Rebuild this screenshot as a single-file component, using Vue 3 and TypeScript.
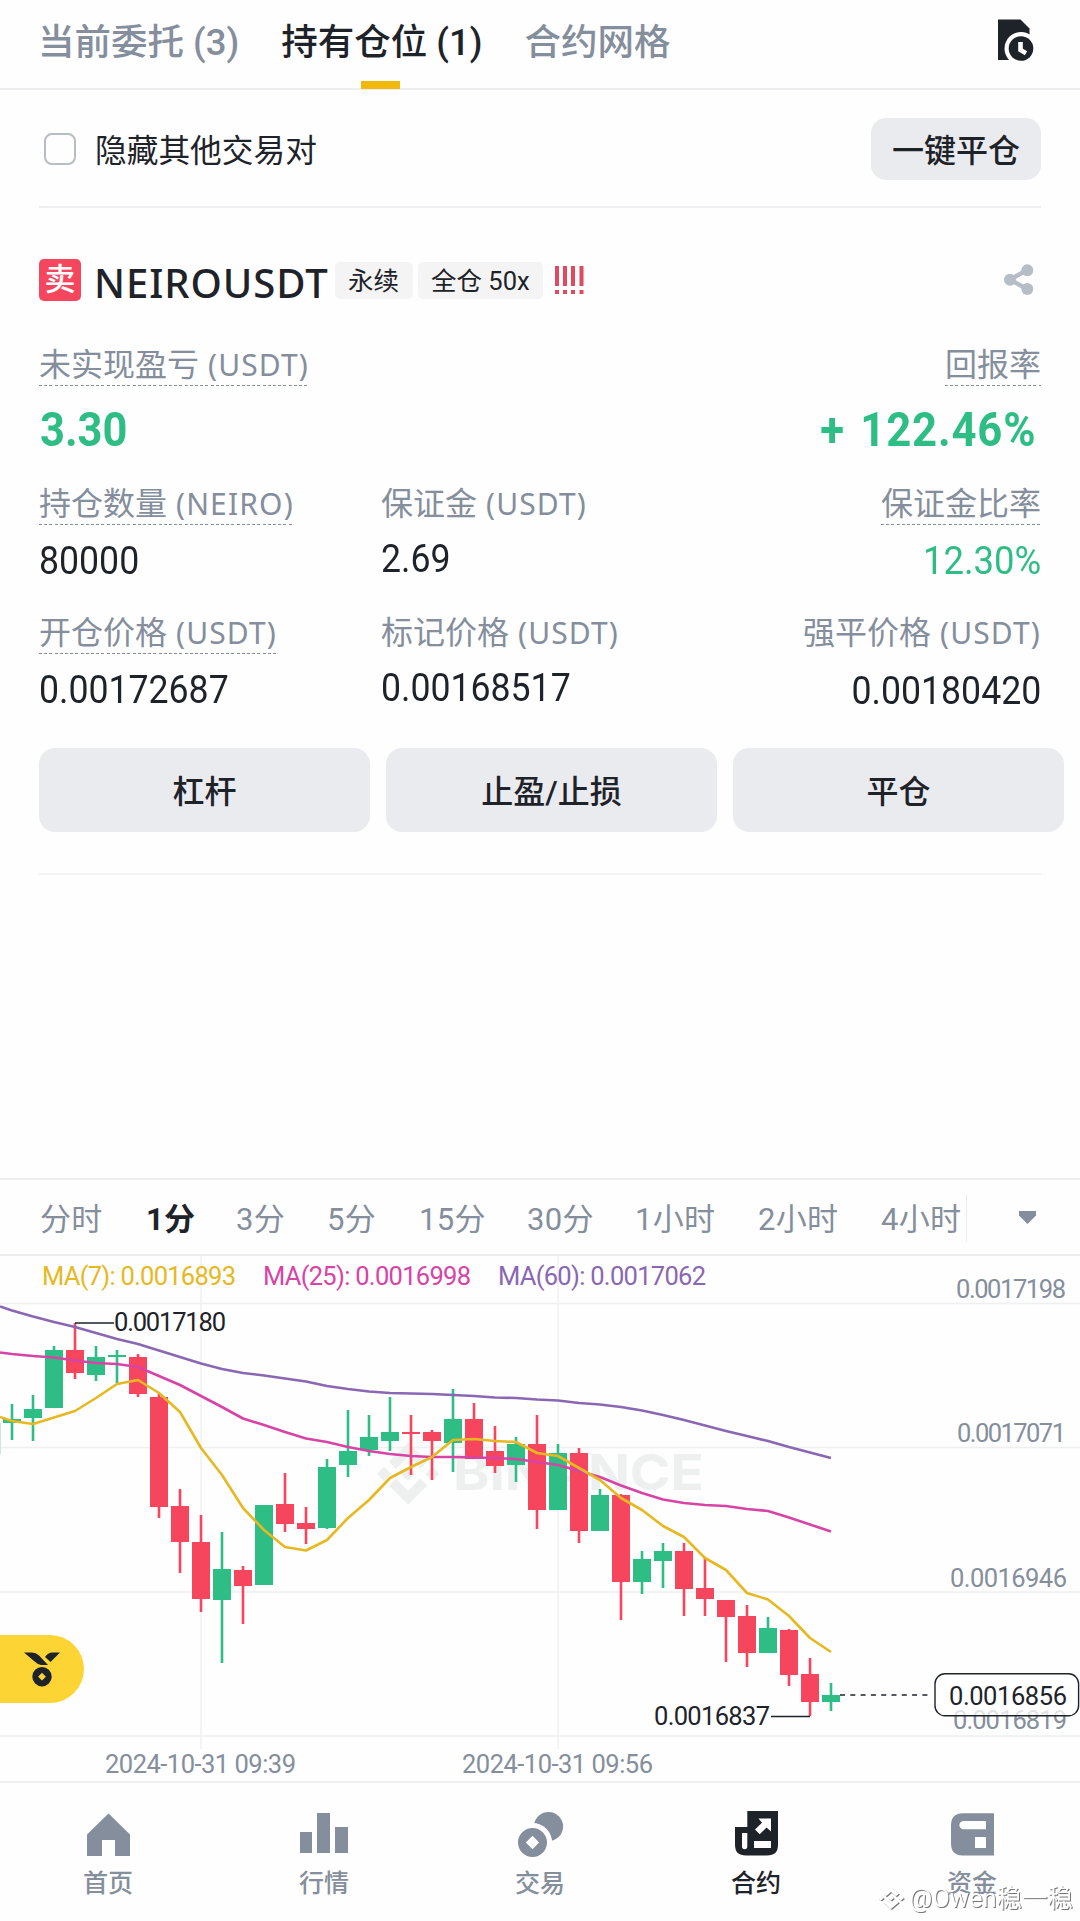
<script setup lang="ts">
interface Metric {
  zh: string
  unit?: string
  value: string
  dashed?: boolean
  tone?: 'up'
  align?: 'right'
}

type Candle = [number, number, number, number, 0 | 1]

const metrics: Metric[] = [
  { zh: '持仓数量', unit: '(NEIRO)', value: '80000', dashed: true },
  { zh: '保证金', unit: '(USDT)', value: '2.69' },
  { zh: '保证金比率', value: '12.30%', dashed: true, tone: 'up', align: 'right' },
  { zh: '开仓价格', unit: '(USDT)', value: '0.00172687', dashed: true },
  { zh: '标记价格', unit: '(USDT)', value: '0.00168517' },
  { zh: '强平价格', unit: '(USDT)', value: '0.00180420', align: 'right' },
]

const actions = ['杠杆', '止盈/止损', '平仓']

const intervals = [
  { label: '分时', width: 106 },
  { label: '1分', width: 90, active: true },
  { label: '3分', width: 91 },
  { label: '5分', width: 92 },
  { label: '15分', width: 108 },
  { label: '30分', width: 108 },
  { label: '1小时', width: 123 },
  { label: '2小时', width: 123 },
  { label: '4小时', width: 85 },
]

// high, body top, body bottom, low, rising
const candles: Candle[] = [
  [1404, 1419, 1423, 1440, 1], [1395, 1409, 1418, 1441, 1], [1346, 1350, 1408, 1408, 1],
  [1323, 1350, 1373, 1379, 0], [1346, 1357, 1375, 1381, 1], [1350, 1355, 1357, 1383, 1],
  [1354, 1357, 1394, 1397, 0], [1393, 1397, 1507, 1518, 0], [1489, 1506, 1542, 1573, 0],
  [1515, 1542, 1599, 1612, 0], [1532, 1569, 1600, 1663, 1], [1566, 1570, 1586, 1624, 0],
  [1505, 1505, 1585, 1585, 1], [1473, 1504, 1524, 1532, 0], [1507, 1523, 1529, 1544, 0],
  [1459, 1467, 1528, 1529, 1], [1410, 1451, 1465, 1477, 1], [1415, 1437, 1450, 1456, 1],
  [1397, 1432, 1441, 1451, 1], [1415, 1432, 1434, 1475, 0], [1430, 1432, 1441, 1480, 0],
  [1389, 1419, 1443, 1472, 1], [1403, 1419, 1459, 1459, 0], [1426, 1451, 1466, 1473, 0],
  [1437, 1444, 1465, 1482, 1], [1415, 1444, 1510, 1529, 0], [1444, 1453, 1510, 1510, 1],
  [1448, 1453, 1531, 1543, 0], [1489, 1495, 1531, 1531, 1], [1494, 1495, 1582, 1620, 0],
  [1551, 1559, 1582, 1594, 1], [1543, 1551, 1561, 1588, 1], [1543, 1551, 1589, 1616, 0],
  [1557, 1588, 1599, 1616, 0], [1600, 1600, 1617, 1662, 0], [1605, 1616, 1653, 1667, 0],
  [1617, 1628, 1653, 1653, 1], [1629, 1630, 1675, 1686, 0], [1658, 1674, 1702, 1716, 0],
  [1683, 1695, 1702, 1711, 1],
]
const centre = (i: number) => 12 + i * 21

const line = (first: number, ys: number[]) =>
  `0,${first} ` + ys.map((y, i) => `${centre(i)},${y}`).join(' ')

const ma7 = line(1417, [
  1421, 1424, 1417.5, 1411, 1398, 1384, 1380, 1393, 1412, 1448, 1475, 1508, 1530, 1547, 1550.5,
  1540, 1518, 1500, 1478, 1467, 1457, 1440, 1439, 1441, 1442, 1453, 1456, 1468, 1480, 1498, 1510,
  1526, 1537, 1558, 1570, 1593, 1599.5, 1616, 1638, 1652,
])
const ma25 = line(1352.5, [
  1354, 1356, 1357.5, 1360.5, 1363, 1364, 1367, 1376, 1385, 1396, 1407, 1418.5, 1425, 1432, 1438.5,
  1442, 1447, 1451, 1454, 1456, 1457, 1457, 1457.5, 1458, 1459, 1462, 1465, 1471, 1477, 1485.5,
  1493, 1499.5, 1503, 1505, 1506, 1509, 1511, 1517.5, 1524.5, 1531.5,
])
const ma60 = line(1306.5, [
  1310.5, 1316.5, 1322, 1327, 1333, 1339, 1344, 1350.5, 1357, 1363.5, 1369, 1373, 1375.5, 1378.5,
  1381.5, 1386, 1389, 1391.5, 1393, 1393.5, 1394, 1395, 1396, 1397.5, 1398, 1399.5, 1400.5, 1403,
  1404.5, 1407, 1410.5, 1415, 1420, 1425.5, 1431, 1436, 1441, 1447, 1452.5, 1458,
])

const gridY = [1303.5, 1447.5, 1592, 1736]
const gridX = [201, 558]

const logo =
  'M16.624 13.92l2.7175 2.7154-7.353 7.353-7.353-7.352 2.7175-2.7164 4.6355 4.6595zm4.6366-4.6366L24 12l-2.7154 2.7164L18.5682 12zm-9.272.001l2.7163 2.6914-2.7164 2.7174L9.2721 12zm-9.2722-.001L5.4088 12l-2.6914 2.6924L0 12zM11.9885.0115l7.353 7.329-2.7174 2.7154-4.6356-4.6356-4.6355 4.6595-2.7174-2.7154z'
</script>

<template>
  <div class="page">
    <header class="tabs">
      <div class="tab">当前委托 <span class="num">(3)</span></div>
      <div class="tab active">持有仓位 <span class="num">(1)</span></div>
      <div class="tab">合约网格</div>
      <svg class="history" viewBox="996 18 40 45" width="40" height="45">
        <path d="M998 19.5h22.5l9 9V60H998z" fill="#1e2329" />
        <circle cx="1021" cy="48.5" r="16.5" fill="#fff" />
        <circle cx="1021" cy="48.5" r="12.3" fill="#1e2329" />
        <path d="M1020.5 42v8l5.5 3.2" fill="none" stroke="#fff" stroke-width="4.6" />
      </svg>
    </header>

    <section class="filter">
      <span class="box"></span>
      <span class="filter-label">隐藏其他交易对</span>
      <button class="close-all">一键平仓</button>
    </section>

    <section class="position">
      <div class="title">
        <span class="side">卖</span>
        <span class="symbol">NEIROUSDT</span>
        <span class="tag perp">永续</span>
        <span class="tag cross">全仓 <span class="lever">50x</span></span>
        <svg class="risk" width="30" height="28" viewBox="0 0 30 28" fill="#df4a5f">
          <path d="M0 0h4v20H0zM0 24h4v4H0zM8 0h4v20h-4zM8 24h4v4h-4zM16 0h4v20h-4zM16 24h4v4h-4zM24.500 0h4v20h-4zM24.500 24h4v4h-4z" />
        </svg>
        <svg class="share" width="30" height="32" viewBox="0 0 30 32">
          <path d="M23 6L6 15.7L23 25" fill="none" stroke="#b7bdc6" stroke-width="4.4" />
          <g fill="#b7bdc6"><circle cx="23.3" cy="6.2" r="6" /><circle cx="6" cy="15.7" r="6" /><circle cx="23.3" cy="25" r="6" /></g>
        </svg>
      </div>

      <div class="pnl">
        <div class="cell">
          <div class="label dashed">未实现盈亏<span class="unit">(USDT)</span></div>
          <div class="big">3.30</div>
        </div>
        <div class="cell right">
          <div class="label dashed">回报率</div>
          <div class="big roi">+ 122.46%</div>
        </div>
      </div>

      <div class="metrics">
        <div v-for="m in metrics" :key="m.zh" class="cell" :class="m.align">
          <div class="label" :class="{ dashed: m.dashed }">{{ m.zh }}<span v-if="m.unit" class="unit">{{ m.unit }}</span></div>
          <div class="value" :class="m.tone">{{ m.value }}</div>
        </div>
      </div>

      <div class="actions">
        <button v-for="a in actions" :key="a">{{ a }}</button>
      </div>
      <div class="end-rule"></div>
    </section>

    <nav class="intervals">
      <span v-for="t in intervals" :key="t.label" class="interval" :class="{ active: t.active }" :style="{ width: t.width + 'px' }">{{ t.label }}</span>
      <span class="more">
        <svg width="17" height="13" viewBox="0 0 17 13"><path d="M0 0h17v4.500L8.500 13L0 4.500z" fill="#848e9c" /></svg>
      </span>
    </nav>

    <section class="chart">
      <svg width="1080" height="525" viewBox="0 1256 1080 525" class="plot">
        <g stroke="#eeeff1" stroke-width="1.4">
          <line v-for="y in gridY" :key="'h' + y" x1="0" x2="1080" :y1="y" :y2="y" />
          <line v-for="x in gridX" :key="'v' + x" :x1="x" :x2="x" y1="1256" y2="1749" />
        </g>

        <g fill="#eef0f0">
          <path :d="logo" transform="translate(377 1442.5) scale(2.6)" />
          <text class="brand" x="453" y="1490" textLength="251" lengthAdjust="spacingAndGlyphs">BINANCE</text>
        </g>

        <rect x="0" y="1423" width="1" height="31" fill="#c5e9dc" />
        <g v-for="(c, i) in candles" :key="i" :fill="c[4] ? '#2ebd85' : '#f6465d'">
          <rect :x="centre(i) - 1.3" :y="c[0]" width="2.6" :height="c[3] - c[0]" />
          <rect :x="centre(i) - 9" :y="c[1]" width="18" :height="c[2] - c[1]" />
        </g>

        <g fill="none" stroke-width="2.6" stroke-linejoin="round">
          <polyline :points="ma60" stroke="#8a67b3" />
          <polyline :points="ma25" stroke="#d744a6" />
          <polyline :points="ma7" stroke="#e6b822" />
        </g>

        <g class="digits">
          <text x="42" y="1284.5" fill="#e6b822" textLength="194">MA(7): 0.0016893</text>
          <text x="263" y="1284.5" fill="#d744a6" textLength="208">MA(25): 0.0016998</text>
          <text x="498" y="1284.5" fill="#8a67b3" textLength="208">MA(60): 0.0017062</text>

          <g fill="#848e9c">
            <text x="956" y="1298" textLength="110">0.0017198</text>
            <text x="957" y="1442" textLength="109">0.0017071</text>
            <text x="950" y="1587" textLength="117">0.0016946</text>
            <text x="953" y="1729" textLength="114">0.0016819</text>
            <text x="105" y="1773" textLength="191">2024-10-31 09:39</text>
            <text x="462" y="1773" textLength="191">2024-10-31 09:56</text>
          </g>

          <path d="M75 1323H114M771 1716.5H810" stroke="#1e2329" stroke-width="1.4" />
          <g fill="#1e2329">
            <text x="114" y="1331" textLength="112">0.0017180</text>
            <text x="654" y="1725" textLength="116">0.0016837</text>
          </g>

          <line x1="840" x2="931" y1="1695" y2="1695" stroke="#1e2329" stroke-width="1.3" stroke-dasharray="5 5.3" />
          <rect x="935" y="1673.8" width="143.6" height="42" rx="10" fill="#fff" fill-opacity="0.75" stroke="#1e2329" stroke-width="1.4" />
          <text x="949" y="1705" fill="#1e2329" textLength="118">0.0016856</text>
        </g>
      </svg>
      <div class="medal">
        <svg width="36" height="35" viewBox="24 1651.5 36 35" fill="#1e2329">
          <path d="M24 1652h8q4 0 7 3l9 9.500h-7q-4-1-7-4zM45 1656.500q3-4.500 7-4.500h8l-9.500 9.500z" />
          <path fill-rule="evenodd" d="M42 1666.500a9.700 9.700 0 1 0 0 19.400a9.700 9.700 0 1 0 0-19.400zM42 1672.300l3.900 3.900l-3.900 3.900l-3.900-3.900z" />
        </svg>
      </div>
    </section>

    <footer class="nav">
      <div class="item">
        <svg width="50" height="50" viewBox="83 1809 50 50"><path d="M108.500 1813.500L130 1834.500V1856H115v-16h-13v16H87v-21.500z" /></svg>
        <span>首页</span>
      </div>
      <div class="item">
        <svg width="50" height="50" viewBox="300 1809 50 50"><path d="M301 1832h12v21h-12zM318 1813h13v40h-13zM336 1827h13v26h-13z" /></svg>
        <span>行情</span>
      </div>
      <div class="item">
        <svg width="50" height="50" viewBox="515 1809 50 50">
          <circle cx="548.500" cy="1826.500" r="14.600" />
          <circle cx="532.500" cy="1842.500" r="19.600" fill="#fff" />
          <path fill-rule="evenodd" d="M532.500 1828a14.500 14.500 0 1 0 0 29a14.500 14.500 0 1 0 0-29zM532.500 1835.800l6.700 6.700l-6.700 6.700l-6.700-6.700z" />
        </svg>
        <span>交易</span>
      </div>
      <div class="item active">
        <svg width="50" height="50" viewBox="731 1809 50 50">
          <path fill-rule="evenodd" d="M735 1827h12.300v-16H778v34q0 10.500-11 10.500h-21q-11 0-11-10.500zM742 1833v13.500a2.600 2.600 0 0 0 5.300 0V1833zM754 1841v7h17v-7zM758.500 1818.500H771v13l-4.500-4l-6.800 6.800l-4.700-4.800l7-6.700z" />
        </svg>
        <span>合约</span>
      </div>
      <div class="item">
        <svg width="50" height="50" viewBox="947 1809 50 50">
          <path fill-rule="evenodd" d="M963 1813.300h31v42.300h-31q-12 0-12-12v-18.300q0-12 12-12zM963.500 1821a4 4 0 0 0 0 8.300H986V1821zM975 1837v11h11v-11z" />
        </svg>
        <span>资金</span>
      </div>
      <div class="credit">
        <svg width="28" height="24" viewBox="-1 -1 26 26" preserveAspectRatio="none"><path :d="logo" /></svg>
        <span>@Owen稳一稳</span>
      </div>
    </footer>
  </div>
</template>

<style>
body {
  background: #fefefe;
}
</style>

<style scoped>
.page {
  display: flex;
  flex-direction: column;
  width: 1080px;
  height: 1921px;
  overflow: hidden;
  background: #fefefe;
  color: #1e2329;
  font-family: Roboto, 'Noto Sans CJK SC', sans-serif;
}
.page * {
  box-sizing: border-box;
}
button {
  border: 0;
  padding: 4px 0 0;
  background: #eaebef;
  color: inherit;
  font: 500 32px/1 Roboto, 'Noto Sans CJK SC', sans-serif;
}
.tabs {
  display: flex;
  height: 90px;
  padding: 0 44px 0 38px;
  border-bottom: 2px solid #eeeef0;
  font-size: 36.5px;
  font-weight: 500;
  line-height: 85px;
  color: #848e9c;
  white-space: nowrap;
}
.tab {
  position: relative;
  margin-right: 42px;
}
.tab.active {
  color: #1e2329;
}
.tab.active::after {
  content: '';
  position: absolute;
  left: 80px;
  bottom: -1px;
  width: 39px;
  height: 8px;
  background: #f0b90b;
}
.history {
  margin: 18px 0 0 auto;
}
.filter {
  display: flex;
  align-items: center;
  height: 118px;
  margin: 0 39px;
  padding-top: 2px;
  border-bottom: 2px solid #eeeff1;
}
.box {
  width: 32px;
  height: 32px;
  margin: 0 19px 0 5px;
  border: 2.5px solid #b7bdc6;
  border-radius: 8px;
}
.filter-label {
  margin-top: 5px;
  font-size: 31.7px;
  line-height: 44px;
}
.close-all {
  width: 170px;
  height: 62px;
  margin-left: auto;
  border-radius: 15px;
}
.position {
  display: flex;
  flex-direction: column;
  height: 970px;
  padding: 42px 39px 0;
}
.title {
  display: flex;
  align-items: center;
  height: 60px;
}
.side {
  width: 42px;
  height: 42px;
  border-radius: 5px;
  background: #f6465d;
  color: #fff;
  font-size: 31px;
  font-weight: 500;
  line-height: 41px;
  text-align: center;
}
.symbol {
  width: 238px;
  margin: 5px 0 0 12px;
  padding-left: 1px;
  font: 500 40px/1 'Noto Sans', sans-serif;
  letter-spacing: 0.95px;
}
.tag {
  height: 37px;
  margin-right: 5px;
  padding: 0 13px;
  border-radius: 5px;
  background: #f4f4f5;
  font-size: 25.5px;
  line-height: 39px;
  white-space: nowrap;
}
.tag.perp {
  width: 78px;
  margin-left: 4px;
}
.tag.cross {
  width: 125px;
}
.risk {
  margin-left: 7px;
}
.share {
  margin: 0 7px 0 auto;
}
.pnl {
  display: flex;
  justify-content: space-between;
  height: 139px;
  margin-top: 34px;
}
.metrics {
  display: grid;
  grid-template-columns: 342px 318px 342px;
  grid-auto-rows: 129px;
}
.cell {
  display: flex;
  flex-direction: column;
  align-items: flex-start;
}
.cell.right {
  align-items: flex-end;
}
.label {
  height: 40px;
  color: #848e9c;
  font-size: 32px;
  line-height: 43px;
  white-space: nowrap;
}
.dashed {
  height: 42px;
  background: repeating-linear-gradient(90deg, #848e9c 0 3px, transparent 3px 5.2px) left bottom / 100% 1.5px no-repeat;
}
.unit {
  margin-left: 9px;
  font: 30px/1 'Noto Sans', sans-serif;
  letter-spacing: 1.15px;
}
.value {
  margin: 14px 0 0;
  font-size: 38px;
  line-height: 44px;
  transform: scaleX(0.938);
  transform-origin: left;
}
.right .value {
  transform-origin: right;
}
.right .label:not(.dashed) + .value {
  margin-top: 17px;
}
.value.up {
  color: #2ebd85;
  transform: scaleX(0.96);
}
.big {
  margin: 16px 0 0 1px;
  color: #2ebd85;
  font-size: 48px;
  font-weight: 700;
  line-height: 56px;
  transform: scaleX(0.905);
  transform-origin: left;
}
.big.roi {
  margin-right: 5px;
  word-spacing: 4px;
  letter-spacing: 0.9px;
  transform: scaleX(0.91);
  transform-origin: right;
}
.actions {
  display: flex;
  gap: 16px;
  margin: 7px -23px 0 0;
}
.actions button {
  width: 331px;
  height: 84px;
  border-radius: 16px;
}
.end-rule {
  height: 2px;
  margin-top: 41px;
  background: #f4f4f6;
}
.intervals {
  display: flex;
  height: 78px;
  padding-left: 40px;
  border-top: 2px solid #eeeef0;
  border-bottom: 2px solid #eeeef0;
  color: #848e9c;
  font-size: 31px;
  letter-spacing: 0.3px;
  line-height: 80px;
  white-space: nowrap;
}
.interval {
  flex: none;
}
.interval.active {
  color: #1e2329;
  font-weight: 700;
}
.more {
  display: flex;
  flex: none;
  justify-content: center;
  width: 118px;
  height: 47px;
  margin-top: 15px;
  padding: 16px 0 0 3px;
  border-left: 1.5px solid #eaebed;
}
.chart {
  position: relative;
  height: 525px;
}
.plot {
  display: block;
}
.digits {
  font: 25.5px Roboto, sans-serif;
}
.brand {
  font: 700 50px Inter, sans-serif;
}
.medal {
  position: absolute;
  left: 0;
  top: 379px;
  width: 84px;
  height: 68px;
  padding: 17px 0 0 24px;
  border-radius: 0 34px 34px 0;
  background: #fcd535;
}
.nav {
  position: relative;
  display: flex;
  height: 140px;
  border-top: 2px solid #eef0f1;
}
.item {
  display: flex;
  flex-direction: column;
  align-items: center;
  width: 216px;
  padding-top: 26px;
  color: #848e9c;
  fill: #848e9c;
  font-size: 25px;
  font-weight: 500;
}
.item span {
  margin-top: 6px;
  line-height: 38px;
}
.item.active {
  color: #1e2329;
  fill: #1e2329;
}
.credit {
  position: absolute;
  right: 7px;
  bottom: 8px;
  display: flex;
  align-items: center;
  gap: 4px;
  color: #fff;
  fill: #fff;
  font-size: 25.5px;
  line-height: 30px;
  white-space: nowrap;
  filter: drop-shadow(1px 1px 0.5px #777);
}
</style>
